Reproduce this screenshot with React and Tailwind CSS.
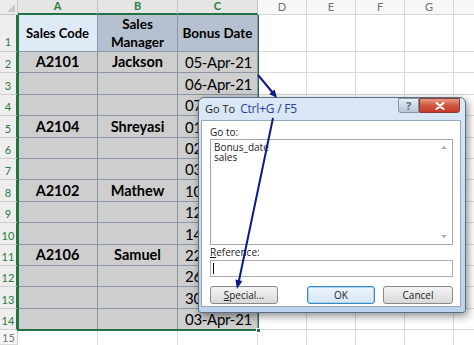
// Excel sheet with the "Go To" dialog opened over a selected range

const ROWS = [
  { n: 2, a: 'A2101', b: 'Jackson', c: '05-Apr-21' },
  { n: 3, c: '06-Apr-21' },
  { n: 4, c: '07-Apr-21' },
  { n: 5, a: 'A2104', b: 'Shreyasi', c: '01-Apr-21' },
  { n: 6, c: '02-Apr-21' },
  { n: 7, c: '03-Apr-21' },
  { n: 8, a: 'A2102', b: 'Mathew', c: '10-Apr-21' },
  { n: 9, c: '12-Apr-21' },
  { n: 10, c: '14-Apr-21' },
  { n: 11, a: 'A2106', b: 'Samuel', c: '22-Apr-21' },
  { n: 12, c: '26-Apr-21' },
  { n: 13, c: '30-Apr-21' },
  { n: 14, c: '03-Apr-21' },
];

const EMPTY = ['D', 'E', 'F', 'G'];

const cellFont = { fontFamily: 'Lato, "Open Sans", sans-serif' };

const RowNum = ({ n, on = true, tall }) => (
  <div
    className={`w-[18px] shrink-0 flex justify-center border-b text-[11px] leading-[14px] ${
      on
        ? `items-end ${tall ? 'pb-[2px]' : 'pb-[1px]'} bg-[#eeeeee] text-[#2b7a44] border-r-2 border-r-[#217346] border-b-[#cfcfcf]`
        : 'items-start pt-[1px] bg-[#f6f6f6] text-[#777] border-r border-r-[#d0d0d0] border-b-[#dcdcdc]'
    }`}
  >
    {n}
  </div>
);

const EmptyCells = () => (
  <>
    {EMPTY.map((k) => (
      <div key={k} className="w-[49px] shrink-0 border-r border-b border-[#dadada]" />
    ))}
    <div className="flex-1 border-b border-[#dadada]" />
  </>
);

const DataRow = ({ n, a, b, c }) => (
  <div className="flex h-[21.4px]">
    <RowNum n={n} />
    <div className="w-[80px] shrink-0 flex items-end justify-center pb-[1px] bg-[#cecece] border-r border-b border-[#8b97a6] font-bold text-[14.5px] leading-[18px] text-black">
      {a}
    </div>
    <div className="w-[80px] shrink-0 flex items-end justify-center pb-[1px] bg-[#cecece] border-r border-b border-[#8b97a6] font-bold text-[14.5px] leading-[18px] text-black">
      {b}
    </div>
    <div className="w-[80px] shrink-0 flex items-end pl-[7px] pb-[1px] bg-[#cecece] border-r border-b border-[#8b97a6] text-[15px] leading-[18px] tracking-[-0.3px] text-black whitespace-nowrap overflow-hidden">
      {c}
    </div>
    <EmptyCells />
  </div>
);

const DlgButton = ({ className = '', children, primary }) => (
  <div
    className={`h-[18px] flex items-center justify-center rounded-[3px] border text-[10px] text-[#1d1d1d] bg-gradient-to-b ${
      primary ? 'border-[#3c86c0] from-[#eef6fc] to-[#d3e6f4] shadow-[inset_0_0_0_1px_#a9d6f5]' : 'border-[#8a8a8a] from-[#f4f4f4] to-[#d9d9d9]'
    } ${className}`}
  >
    {children}
  </div>
);

export default function App() {
  return (
    <div className="relative w-[474px] h-[345px] overflow-hidden bg-white" style={cellFont}>
      {/* column headers */}
      <div className="flex h-[15px]">
        <div className="w-[18px] shrink-0 relative bg-[#ececec] border-r border-b border-[#c8c8c8]">
          <div className="absolute right-[2px] bottom-[2px] w-0 h-0 border-l-[8px] border-l-transparent border-b-[8px] border-b-[#c9c9c9]" />
        </div>
        {['A', 'B', 'C'].map((k) => (
          <div
            key={k}
            className="w-[80px] shrink-0 flex items-center justify-center bg-[#e5e5e5] border-r border-r-[#c2c2c2] border-b-2 border-b-[#217346] text-[11px] font-bold text-[#2b7a44]"
          >
            {k}
          </div>
        ))}
        {EMPTY.map((k) => (
          <div
            key={k}
            className="w-[49px] shrink-0 flex items-center justify-center bg-[#f7f7f7] border-r border-b border-[#d6d6d6] text-[11px] text-[#707070]"
          >
            {k}
          </div>
        ))}
        <div className="flex-1 bg-[#f7f7f7] border-b border-[#d6d6d6]" />
      </div>

      {/* row 1: headings */}
      <div className="flex h-[37px]">
        <RowNum n={1} tall />
        <div className="w-[80px] shrink-0 flex items-center justify-center bg-[#deeaf6] border-r border-b border-[#8b97a6] font-bold text-[13px] leading-[17px] text-black">
          Sales Code
        </div>
        <div className="w-[80px] shrink-0 flex items-center justify-center text-center bg-[#b5c1ce] border-r border-b border-[#8b97a6] font-bold text-[13.5px] leading-[18px] text-black">
          Sales
          <br />
          Manager
        </div>
        <div className="w-[80px] shrink-0 flex items-center justify-center bg-[#b5c1ce] border-r border-b border-[#8b97a6] font-bold text-[13.5px] leading-[17px] text-black">
          Bonus Date
        </div>
        <EmptyCells />
      </div>

      {ROWS.map((r) => (
        <DataRow key={r.n} {...r} />
      ))}

      <div className="flex h-[15px]">
        <RowNum n={15} on={false} />
        <div className="w-[80px] shrink-0 border-r border-[#dadada]" />
        <div className="w-[80px] shrink-0 border-r border-[#dadada]" />
        <div className="w-[80px] shrink-0 border-r border-[#dadada]" />
        {EMPTY.map((k) => (
          <div key={k} className="w-[49px] shrink-0 border-r border-[#dadada]" />
        ))}
      </div>

      {/* selection outline + fill handle */}
      <div className="absolute left-[17px] top-[15px] w-[242px] h-[316px] border-l-2 border-b-2 border-r border-[#217346] pointer-events-none" />
      <div className="absolute left-[256px] top-[328px] w-[5px] h-[5px] bg-[#217346] border border-white pointer-events-none" />

      {/* Go To dialog */}
      <div
        className="absolute left-[198px] top-[97px] w-[268px] h-[216px] flex flex-col rounded-t-[6px] rounded-b-[3px] border border-[#5d6f85] bg-gradient-to-b from-[#dbe8f6] via-[#c9dbef] to-[#bcd2ea] shadow-[2px_3px_8px_rgba(0,0,0,0.45)]"
        style={{ fontFamily: '"Open Sans", "Noto Sans", sans-serif' }}
      >
        <div className="h-[22px] flex items-start pr-[5px]">
          <div className="flex items-center h-[22px] pl-[6px]">
            <span className="text-[11px] text-[#1b1b1b]">Go To</span>
            <span className="ml-[5px] text-[12px] tracking-[-0.2px] text-[#263f96]">Ctrl+G / F5</span>
          </div>
          <div className="ml-auto flex">
            <div className="w-[21px] h-[15px] flex items-center justify-center rounded-bl-[3px] border border-[#8193a8] bg-gradient-to-b from-[#e8eef5] to-[#b8c6d6] text-[11px] font-bold text-[#5a6676] leading-none">
              ?
            </div>
            <div className="w-[41px] h-[15px] flex items-center justify-center rounded-br-[3px] border border-[#8d3a30] bg-gradient-to-b from-[#e49a86] via-[#cf5640] to-[#c43a27]">
              <svg width="10" height="8" viewBox="0 0 10 8">
                <path d="M1.5 1 L8.5 7 M8.5 1 L1.5 7" stroke="white" strokeWidth="2" strokeLinecap="round" />
              </svg>
            </div>
          </div>
        </div>

        <div className="flex-1 ml-[2px] mr-[4px] mb-[5px] flex flex-col bg-white border border-[#97a9c0] pl-[8px] pr-[7px] pt-[5px]">
          <div className="h-[13px] text-[10px] leading-[13px] text-[#1d1d1d]">Go to:</div>
          <div className="h-[106px] flex border border-[#a6a8ae]">
            <div className="flex-1 pl-[3px] pt-[2px] text-[10px] leading-[10px] text-[#1d1d1d]">
              <div>Bonus_date</div>
              <div>sales</div>
            </div>
            <div className="w-[16px] flex flex-col items-center justify-between py-[6px]">
              <div className="w-0 h-0 border-x-[3px] border-x-transparent border-b-[3px] border-b-[#a8a8a8]" />
              <div className="w-0 h-0 border-x-[3px] border-x-transparent border-t-[3px] border-t-[#a8a8a8]" />
            </div>
          </div>
          <div className="h-[15px] text-[10px] leading-[15px] text-[#1d1d1d]">
            <span className="underline">R</span>eference:
          </div>
          <div className="h-[17px] flex items-center border border-[#abadb3] pl-[2px]">
            <div className="w-px h-[11px] bg-black" />
          </div>
          <div className="mt-[9px] flex">
            <DlgButton className="w-[68px]">
              <span className="underline">S</span>pecial...
            </DlgButton>
            <DlgButton className="w-[68px] ml-[29px]" primary>
              OK
            </DlgButton>
            <DlgButton className="w-[70px] ml-[8px]">Cancel</DlgButton>
          </div>
        </div>
      </div>

      {/* annotation arrows */}
      <svg className="absolute inset-0 pointer-events-none" width="474" height="345" viewBox="0 0 474 345">
        <path d="M258 75 L273 93" stroke="#0c1a86" strokeWidth="2" fill="none" />
        <polygon points="277,98 274.6,89.6 269.2,94" fill="#0c1a86" />
        <path d="M273 118 L238.9 281" stroke="#0c1a86" strokeWidth="2" fill="none" />
        <polygon points="237,289 242.3,280.9 235.4,279.5" fill="#0c1a86" />
      </svg>
    </div>
  );
}
